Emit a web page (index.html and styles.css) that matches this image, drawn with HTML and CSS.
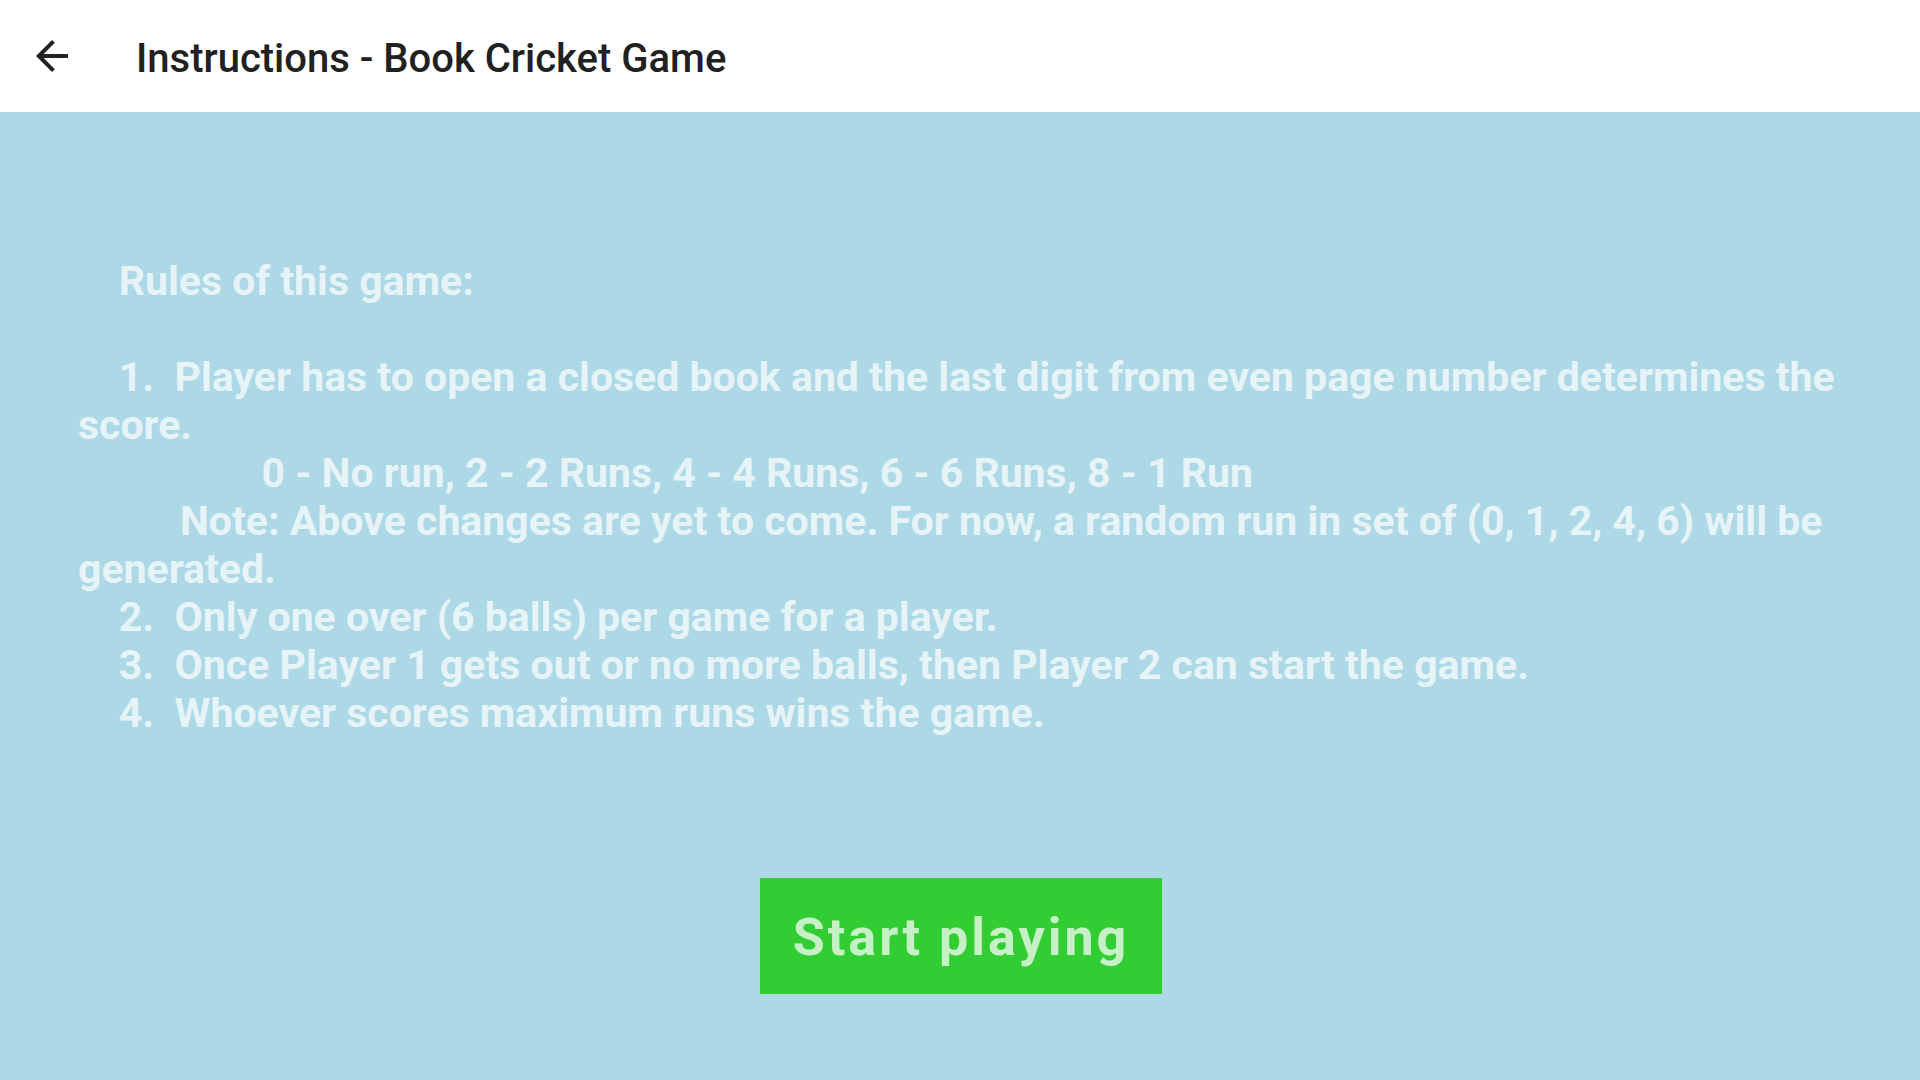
FILE: index.html
```html
<!DOCTYPE html>
<html lang="en">
<head>
    <meta charset="UTF-8">
    <meta name="viewport" content="width=device-width, initial-scale=1.0">
    <title>Instructions - Book Cricket Game</title>
    <link rel="stylesheet" href="styles.css">
</head>
<body>
    <div class="toolbar">
        <button class="nav-back" aria-label="Back">
            <svg viewBox="0 0 24 24" width="48" height="48">
                <path d="M20 11H7.83l5.59-5.59L12 4l-8 8 8 8 1.41-1.41L7.83 13H20v-2z" fill="currentColor"/>
            </svg>
        </button>
        <h1 class="title">Instructions - Book Cricket Game</h1>
    </div>

    <div class="content">
        <div class="rules">    Rules of this game:

    1.  Player has to open a closed book and the last digit from even page number determines the score.
                  0 - No run, 2 - 2 Runs, 4 - 4 Runs, 6 - 6 Runs, 8 - 1 Run
          Note: Above changes are yet to come. For now, a random run in set of (0, 1, 2, 4, 6) will be generated.
    2.  Only one over (6 balls) per game for a player.
    3.  Once Player 1 gets out or no more balls, then Player 2 can start the game.
    4.  Whoever scores maximum runs wins the game.</div>

        <button class="start">Start playing</button>
    </div>
</body>
</html>
```

FILE: styles.css
```css
html, body {
    height: 100%;
}

body {
    margin: 0;
    font-family: 'Roboto', 'Noto Sans', sans-serif;
    background-color: #add8e6;
    display: flex;
    flex-direction: column;
}

.toolbar {
    height: 112px;
    background-color: #fff;
    display: flex;
    align-items: center;
    flex-shrink: 0;
}

.nav-back {
    width: 48px;
    height: 48px;
    margin-left: 28px;
    padding: 0;
    border: none;
    background: none;
    color: #212121;
    cursor: pointer;
}

.nav-back svg {
    display: block;
}

.title {
    margin: 4px 0 0 60px;
    font-size: 40px;
    font-weight: 500;
    color: #212121;
}

.content {
    flex: 1;
    display: flex;
    flex-direction: column;
    align-items: center;
    padding: 145px 78px 0;
}

.rules {
    align-self: stretch;
    white-space: pre-wrap;
    font-size: 41px;
    line-height: 48px;
    font-weight: 700;
    color: rgba(255, 255, 255, 0.72);
}

.start {
    margin: 141px 0 0 2px;
    width: 402px;
    height: 116px;
    padding-top: 4px;
    border: none;
    background-color: #32cd32;
    color: rgba(255, 255, 255, 0.72);
    font-family: 'Roboto', sans-serif;
    font-size: 52px;
    font-weight: 700;
    letter-spacing: 3px;
    cursor: pointer;
}
```
